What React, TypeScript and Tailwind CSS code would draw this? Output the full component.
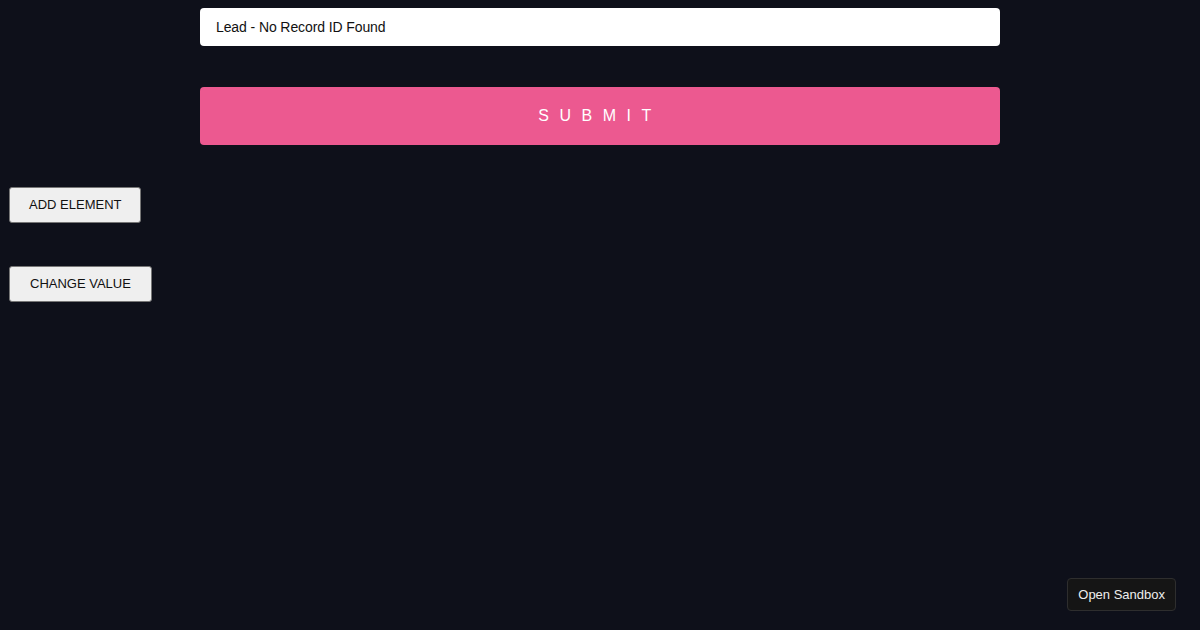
export default function App() {
  return (
    <div className="relative min-h-[630px] w-full bg-[#0e101a] font-['Liberation_Sans',Arial,sans-serif]">
      <div className="mx-auto w-[800px] pt-2">
        {/* Record field */}
        <input
          readOnly
          value="Lead - No Record ID Found"
          className="block h-[38px] w-full rounded-[4px] bg-white px-4 text-[14px] tracking-[-0.1px] text-[#111]"
        />

        {/* Submit */}
        <button
          type="button"
          className="mt-[41px] block h-[58px] w-full rounded-[4px] bg-[#ec5990] text-[16px] tracking-[10.5px] text-white"
        >
          SUBMIT
        </button>
      </div>

      {/* Controls */}
      <div className="mt-[42px] flex flex-col items-start gap-[43px] pl-[9px]">
        <button
          type="button"
          className="h-[36px] rounded-[3px] border border-[#767676] bg-[#efefef] px-[19px] text-[13px] text-[#111]"
        >
          ADD ELEMENT
        </button>
        <button
          type="button"
          className="h-[36px] rounded-[3px] border border-[#767676] bg-[#efefef] px-5 text-[13px] text-[#111]"
        >
          CHANGE VALUE
        </button>
      </div>

      <button
        type="button"
        className="absolute bottom-[19px] right-[24px] h-[33px] rounded-[4px] border border-[#2e2e2e] bg-[#151515] px-[10px] text-[13px] text-[#eeeeee]"
      >
        Open Sandbox
      </button>
    </div>
  );
}
